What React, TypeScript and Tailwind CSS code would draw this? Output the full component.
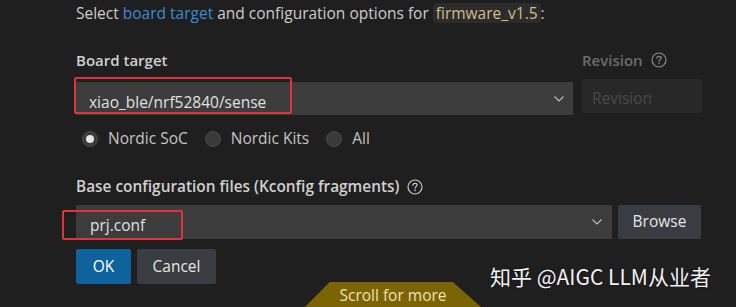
import React from 'react';

const Chevron: React.FC = () => (
  <svg width="12" height="8" viewBox="0 0 12 8" fill="none" className="shrink-0">
    <path d="M1.5 1.5 L6 6 L10.5 1.5" stroke="#c0c0c0" strokeWidth="1.1" />
  </svg>
);

const HelpIcon: React.FC<{ dim?: boolean }> = ({ dim }) => (
  <svg width="16" height="16" viewBox="0 0 16 16" fill="none">
    <circle cx="8" cy="8" r="7" stroke={dim ? '#8a8a8a' : '#c8c8c8'} strokeWidth="1.2" />
    <path
      d="M5.9 6.2c0-1.2 0.9-1.9 2.1-1.9s2.1 0.7 2.1 1.8c0 1.5-2 1.6-2 3.1"
      stroke={dim ? '#8a8a8a' : '#c8c8c8'}
      strokeWidth="1.2"
      strokeLinecap="round"
    />
    <circle cx="8.1" cy="11.4" r="0.8" fill={dim ? '#8a8a8a' : '#c8c8c8'} />
  </svg>
);

const Radio: React.FC<{ label: string; checked?: boolean }> = ({ label, checked }) => (
  <label className="flex items-center gap-[10px]">
    <span className="w-[16px] h-[16px] rounded-full bg-[#3a3a3a] border border-[#4a4a4a] flex items-center justify-center">
      {checked && <span className="w-[8px] h-[8px] rounded-full bg-[#e6e6e6]" />}
    </span>
    <span className="text-[#c4c4c4]">{label}</span>
  </label>
);

const App: React.FC = () => {
  return (
    <div
      className="relative w-[736px] h-[307px] overflow-hidden bg-[#1f1f1f] text-[#cccccc] text-[15.5px]"
      style={{ fontFamily: '"Open Sans", "Noto Sans", sans-serif' }}
    >
      <div className="pl-[76px] pr-[34px]">
        {/* intro line */}
        <p className="pt-[3px] leading-[20px] flex items-center">
          Select&nbsp;<span className="text-[#3b8ad6]">board target</span>&nbsp;and configuration options for&nbsp;
          <span className="bg-[#2c2c2c] text-[#d2bd86] rounded-[3px] px-[3px]">firmware_v1.5</span>:
        </p>

        {/* board target + revision */}
        <div className="mt-[27px] grid grid-cols-[497px_120px] gap-x-[9px]">
          <div>
            <div className="h-[20px] leading-[20px] text-[15px] font-semibold text-[#d0d0d0]">Board target</div>
            <div className="relative mt-[12px] h-[33px] bg-[#3c3c3c] flex items-center justify-between pl-[13px] pr-[8px]">
              <span className="pt-[9px] text-[#e0e0e0]">xiao_ble/nrf52840/sense</span>
              <Chevron />
              <div className="absolute left-[-2px] top-[-5px] w-[218px] h-[37px] border-2 border-[#e0343a] rounded-[2px]" />
            </div>
          </div>
          <div>
            <div className="h-[20px] leading-[20px] text-[15px] font-semibold text-[#6c6c6c] flex items-center gap-[8px]">
              Revision <HelpIcon dim />
            </div>
            <div className="mt-[9px] h-[34px] bg-[#282828] rounded-[2px] flex items-center pl-[10px] text-[#484848]">
              <span className="pt-[5px]">Revision</span>
            </div>
          </div>
        </div>

        {/* radios */}
        <div className="mt-[16px] pl-[6px] h-[16px] flex items-center gap-[17px]">
          <Radio label="Nordic SoC" checked />
          <Radio label="Nordic Kits" />
          <Radio label="All" />
        </div>

        {/* base configuration */}
        <div className="mt-[30px] h-[20px] leading-[20px] text-[15.4px] font-semibold text-[#d0d0d0] flex items-center gap-[8px]">
          Base configuration files (Kconfig fragments) <HelpIcon />
        </div>
        <div className="mt-[8px] flex gap-[6px]">
          <div className="relative w-[536px] h-[34px] bg-[#3c3c3c] flex items-center justify-between pl-[14px] pr-[9px]">
            <span className="pt-[8px] text-[#e0e0e0]">prj.conf</span>
            <Chevron />
            <div className="absolute left-[-14px] top-[5px] w-[121px] h-[30px] border-2 border-[#e0343a] rounded-[2px]" />
          </div>
          <button className="w-[83px] h-[34px] bg-[#393c40] text-[#e6e6e6] rounded-[2px]">Browse</button>
        </div>

        {/* actions */}
        <div className="mt-[10px] flex gap-[6px]">
          <button className="w-[55px] h-[35px] bg-[#0e639c] text-[#ffffff] rounded-[2px]">OK</button>
          <button className="w-[79px] h-[35px] bg-[#393c40] text-[#e6e6e6] rounded-[2px]">Cancel</button>
        </div>
      </div>

      {/* scroll hint */}
      <div className="absolute left-[305px] top-[282px] w-[176px] h-[25px] bg-[#7b6403] [clip-path:polygon(14%_0,84%_0,100%_100%,0_100%)] flex items-center justify-center text-[#ece2b8]">
        <span className="pt-[2px]">Scroll for more</span>
      </div>

      {/* watermark */}
      <div
        className="absolute left-[490px] top-[263px] text-[21px] leading-[26px] text-[#f2f2f2] [text-shadow:0_0_2px_rgba(0,0,0,0.6)]"
        style={{ fontFamily: '"Noto Sans CJK SC", "Open Sans", sans-serif' }}
      >
        知乎 @AIGC LLM从业者
      </div>
    </div>
  );
};

export default App;
